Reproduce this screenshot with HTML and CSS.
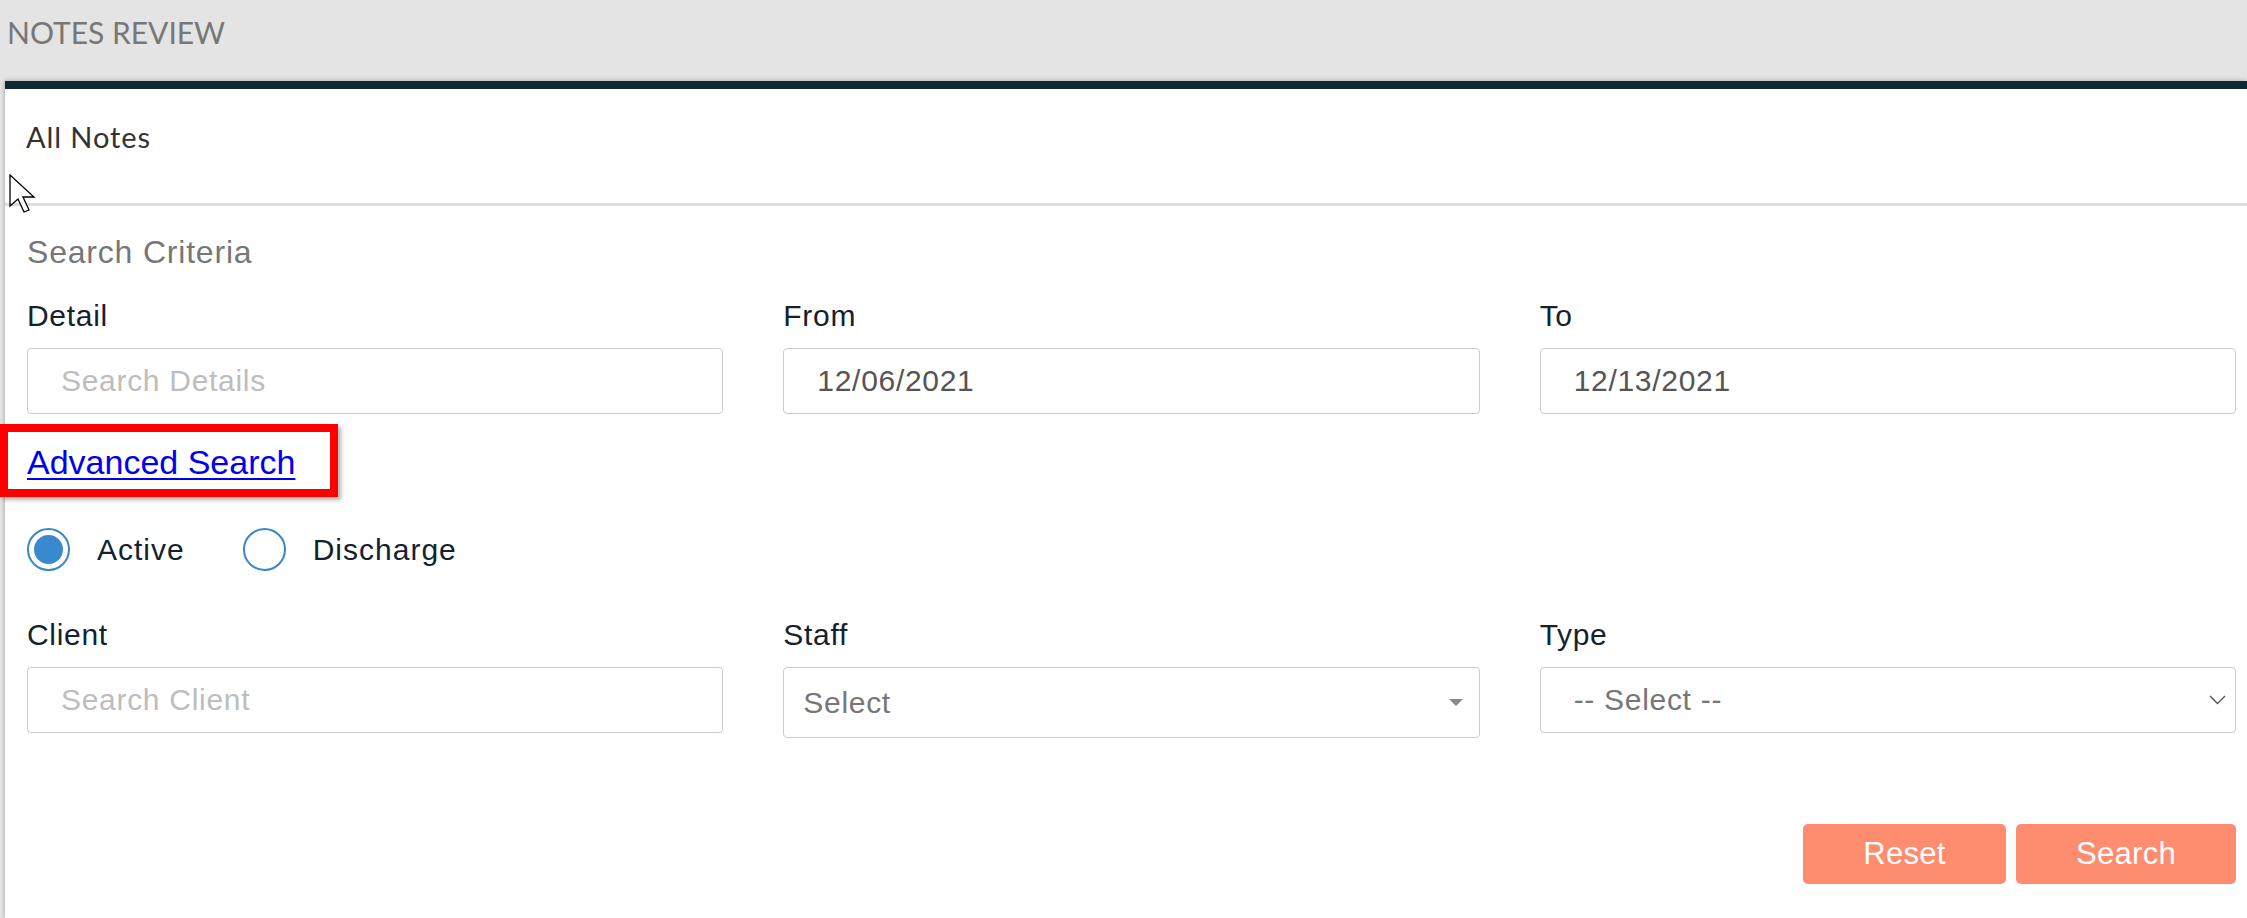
FILE: index.html
```html
<!DOCTYPE html>
<html lang="en">
<head>
<meta charset="utf-8">
<title>Notes Review</title>
<link rel="stylesheet" href="styles.css">
</head>
<body>
<header class="page-header">
  <h1 class="page-title">NOTES REVIEW</h1>
</header>
<main class="card">
  <div class="card-head">
    <h2 class="card-title">All Notes</h2>
  </div>
  <section class="criteria">
    <h3 class="criteria-title">Search Criteria</h3>
    <div class="grid">
      <div class="field">
        <span class="label">Detail</span>
        <div class="input placeholder">Search Details</div>
      </div>
      <div class="field">
        <span class="label">From</span>
        <div class="input value">12/06/2021</div>
      </div>
      <div class="field">
        <span class="label">To</span>
        <div class="input value">12/13/2021</div>
      </div>
    </div>
    <div class="highlight">
      <a class="adv-link" href="#">Advanced Search</a>
    </div>
    <div class="radios">
      <span class="radio checked"></span>
      <span class="radio-label">Active</span>
      <span class="radio"></span>
      <span class="radio-label">Discharge</span>
    </div>
    <div class="grid row2">
      <div class="field">
        <span class="label">Client</span>
        <div class="input placeholder">Search Client</div>
      </div>
      <div class="field">
        <span class="label">Staff</span>
        <div class="input select staff">
          <span class="select-text">Select</span>
          <span class="caret"></span>
        </div>
      </div>
      <div class="field">
        <span class="label">Type</span>
        <div class="input select type">
          <span class="select-text">-- Select --</span>
          <svg class="chevron" width="17" height="10" viewBox="0 0 17 10"><path d="M1 1 L8.5 8.5 L16 1" fill="none" stroke="#555" stroke-width="1.4"/></svg>
        </div>
      </div>
    </div>
    <div class="actions">
      <button class="btn reset" type="button">Reset</button>
      <button class="btn search" type="button">Search</button>
    </div>
  </section>
</main>
<svg class="cursor" width="28" height="40" viewBox="0 0 28 40"><path d="M1 1 L1 32 L9 25 L15 38 L20 36 L14 23 L25 23 Z" fill="#fff" stroke="#000" stroke-width="1.3" stroke-linejoin="miter"/></svg>
</body>
</html>
```

FILE: styles.css
```css
html, body {
  margin: 0;
  padding: 0;
}

body {
  position: relative;
  width: 2247px;
  height: 918px;
  overflow: hidden;
  background: #e4e4e4;
  font-family: "Liberation Sans", Arial, sans-serif;
}

.page-header {
  height: 81px;
  box-sizing: border-box;
  padding: 14px 0 0 7px;
}

.page-title {
  margin: 0;
  font-family: Lato, "Liberation Sans", sans-serif;
  font-weight: 400;
  font-size: 30px;
  line-height: 36px;
  color: #777;
}

.card {
  margin-left: 5px;
  height: 837px;
  box-sizing: border-box;
  background: #fff;
  border-top: 8px solid #0f2834;
  box-shadow: -2px 0 3px rgba(0, 0, 0, 0.12), 0 -3px 4px rgba(0, 0, 0, 0.08);
}

.card-head {
  height: 117px;
  box-sizing: border-box;
  padding: 31px 0 0 21px;
  border-bottom: 3px solid #dcdcdc;
}

.card-title {
  margin: 0;
  font-family: Lato, "Liberation Sans", sans-serif;
  font-weight: 400;
  font-size: 29px;
  line-height: 34px;
  color: #333;
  letter-spacing: 0.9px;
}

.criteria {
  padding: 29px 11px 0 22px;
}

.criteria-title {
  margin: 0 0 30px;
  font-weight: 400;
  font-size: 32px;
  line-height: 34px;
  color: #777;
  letter-spacing: 0.8px;
}

.grid {
  display: grid;
  grid-template-columns: repeat(3, 1fr);
  column-gap: 60px;
  align-items: start;
}

.label {
  display: block;
  margin-bottom: 15px;
  font-size: 30px;
  line-height: 34px;
  color: #14222d;
  letter-spacing: 0.7px;
}

.input {
  height: 66px;
  box-sizing: border-box;
  display: flex;
  align-items: center;
  padding: 0 33px;
  border: 1px solid #ccc;
  border-radius: 4px;
  font-size: 30px;
  letter-spacing: 0.7px;
}

.placeholder {
  color: #bdbdbd;
}

.value {
  color: #555;
}

.select {
  justify-content: space-between;
  color: #777;
}

.staff {
  height: 71px;
  padding: 0 16px 0 19px;
}

.type {
  padding: 0 9px 0 33px;
}

.caret {
  width: 0;
  height: 0;
  border-left: 7px solid transparent;
  border-right: 7px solid transparent;
  border-top: 7px solid #888;
}

.chevron {
  display: block;
}

.highlight {
  width: fit-content;
  margin: 10px 0 0 -27px;
  padding: 11px 35px 8px 19px;
  border: 8px solid #ff0000;
  box-shadow: 3px 3px 4px rgba(0, 0, 0, 0.3);
}

.adv-link {
  display: block;
  font-size: 34px;
  line-height: 38px;
  color: #0000ee;
  text-decoration: underline;
  text-decoration-thickness: 2px;
  text-underline-offset: 4px;
}

.radios {
  display: flex;
  align-items: center;
  margin-top: 31px;
  height: 43px;
}

.radio {
  position: relative;
  width: 43px;
  height: 43px;
  box-sizing: border-box;
  border: 2px solid #3a87c8;
  border-radius: 50%;
  background: #fff;
}

.radio.checked::after {
  content: "";
  position: absolute;
  left: 5px;
  top: 5px;
  width: 29px;
  height: 29px;
  border-radius: 50%;
  background: #3a89cf;
}

.radio-label {
  margin: 0 58px 0 27px;
  font-size: 30px;
  color: #14222d;
  letter-spacing: 1px;
}

.row2 {
  margin-top: 47px;
}

.actions {
  display: flex;
  justify-content: flex-end;
  gap: 10px;
  margin-top: 86px;
}

.btn {
  height: 60px;
  border: none;
  border-radius: 5px;
  background: #fe8c6f;
  color: #fff;
  font-family: "Liberation Sans", Arial, sans-serif;
  font-size: 31px;
  letter-spacing: 0.3px;
  padding: 0;
}

.reset {
  width: 203px;
}

.search {
  width: 220px;
}

.cursor {
  position: absolute;
  left: 9px;
  top: 174px;
}
```
